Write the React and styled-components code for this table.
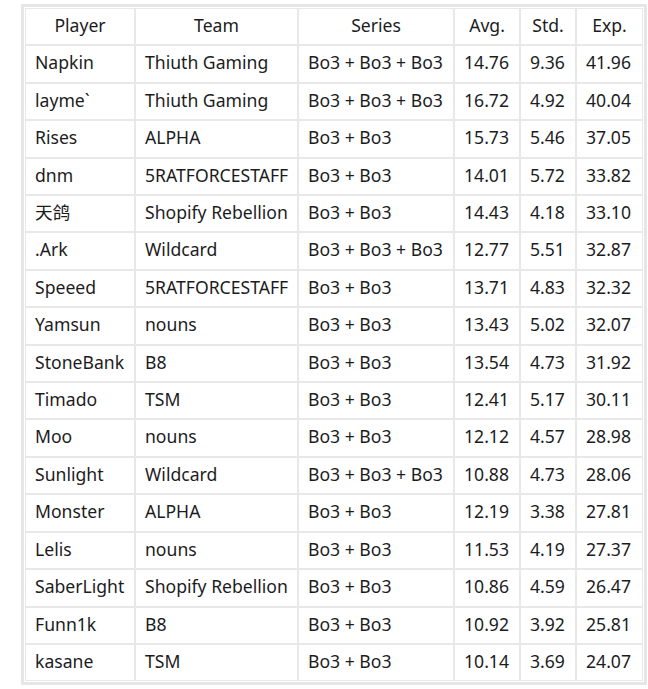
import styled, { createGlobalStyle } from 'styled-components';

const GlobalStyle = createGlobalStyle`
    body {
        margin: 0;
        background: #ffffff;
        font-family: "Noto Sans", "Noto Sans CJK SC", sans-serif;
        color: #1c1c1e;
    }
`;

const Page = styled.div`
    padding: 4px 0 0 21px;
`;

const Table = styled.table`
    border-collapse: separate;
    border-spacing: 0;
    border: 3px solid #e6e6e6;
    padding: 1px;
    table-layout: fixed;
    width: 624px;
    font-size: 17.6px;
    background: #ffffff;
`;

const Col = styled.col`
    width: ${p => p.$w}px;
`;

const Th = styled.th`
    border: 1px solid #e8e8e8;
    padding: 4px 9px 6px;
    line-height: 25.4px;
    font-weight: normal;
    text-align: center;
    white-space: nowrap;
`;

const Td = styled.td`
    border: 1px solid #e8e8e8;
    padding: 4px 9px 6px;
    line-height: 25.4px;
    text-align: left;
    white-space: nowrap;
`;

const columns = [
    { label: 'Player', w: 110 },
    { label: 'Team', w: 163 },
    { label: 'Series', w: 156 },
    { label: 'Avg.', w: 66 },
    { label: 'Std.', w: 56 },
    { label: 'Exp.', w: 67 },
];

const rows = [
    ['Napkin', 'Thiuth Gaming', 'Bo3 + Bo3 + Bo3', '14.76', '9.36', '41.96'],
    ['layme`', 'Thiuth Gaming', 'Bo3 + Bo3 + Bo3', '16.72', '4.92', '40.04'],
    ['Rises', 'ALPHA', 'Bo3 + Bo3', '15.73', '5.46', '37.05'],
    ['dnm', '5RATFORCESTAFF', 'Bo3 + Bo3', '14.01', '5.72', '33.82'],
    ['天鸽', 'Shopify Rebellion', 'Bo3 + Bo3', '14.43', '4.18', '33.10'],
    ['.Ark', 'Wildcard', 'Bo3 + Bo3 + Bo3', '12.77', '5.51', '32.87'],
    ['Speeed', '5RATFORCESTAFF', 'Bo3 + Bo3', '13.71', '4.83', '32.32'],
    ['Yamsun', 'nouns', 'Bo3 + Bo3', '13.43', '5.02', '32.07'],
    ['StoneBank', 'B8', 'Bo3 + Bo3', '13.54', '4.73', '31.92'],
    ['Timado', 'TSM', 'Bo3 + Bo3', '12.41', '5.17', '30.11'],
    ['Moo', 'nouns', 'Bo3 + Bo3', '12.12', '4.57', '28.98'],
    ['Sunlight', 'Wildcard', 'Bo3 + Bo3 + Bo3', '10.88', '4.73', '28.06'],
    ['Monster', 'ALPHA', 'Bo3 + Bo3', '12.19', '3.38', '27.81'],
    ['Lelis', 'nouns', 'Bo3 + Bo3', '11.53', '4.19', '27.37'],
    ['SaberLight', 'Shopify Rebellion', 'Bo3 + Bo3', '10.86', '4.59', '26.47'],
    ['Funn1k', 'B8', 'Bo3 + Bo3', '10.92', '3.92', '25.81'],
    ['kasane', 'TSM', 'Bo3 + Bo3', '10.14', '3.69', '24.07'],
];

export default function App() {
    return (
        <Page>
            <GlobalStyle />
            <Table>
                <colgroup>
                    {columns.map(c => <Col key={c.label} $w={c.w} />)}
                </colgroup>
                <thead>
                    <tr>
                        {columns.map(c => <Th key={c.label}>{c.label}</Th>)}
                    </tr>
                </thead>
                <tbody>
                    {rows.map(r => (
                        <tr key={r[0]}>
                            {r.map((v, i) => <Td key={i}>{v}</Td>)}
                        </tr>
                    ))}
                </tbody>
            </Table>
        </Page>
    );
}
